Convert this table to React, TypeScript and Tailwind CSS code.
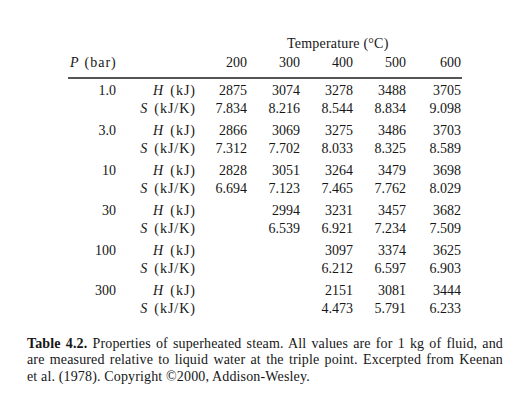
const rows = [
  { p: "1.0", h: ["2875", "3074", "3278", "3488", "3705"], s: ["7.834", "8.216", "8.544", "8.834", "9.098"] },
  { p: "3.0", h: ["2866", "3069", "3275", "3486", "3703"], s: ["7.312", "7.702", "8.033", "8.325", "8.589"] },
  { p: "10", h: ["2828", "3051", "3264", "3479", "3698"], s: ["6.694", "7.123", "7.465", "7.762", "8.029"] },
  { p: "30", h: ["", "2994", "3231", "3457", "3682"], s: ["", "6.539", "6.921", "7.234", "7.509"] },
  { p: "100", h: ["", "", "3097", "3374", "3625"], s: ["", "", "6.212", "6.597", "6.903"] },
  { p: "300", h: ["", "", "2151", "3081", "3444"], s: ["", "", "4.473", "5.791", "6.233"] },
];

const temps = ["200", "300", "400", "500", "600"];
const cols = "grid grid-cols-[48px_79px_52px_53px_53px_53px_55px]";
const line = "text-justify [text-align-last:justify]";

export default function App() {
  return (
    <div
      className="w-[524px] h-[406px] bg-white text-[#161616] overflow-hidden"
      style={{ fontFamily: '"Liberation Serif", "Times New Roman", serif' }}
    >
      <div className="ml-[68px] mt-[35px] w-[394px] text-[14px] leading-[18px]">
        <div className={cols}>
          <div className="col-start-3 col-span-5 pl-[92px] tracking-[0.2px]">Temperature (°C)</div>
        </div>
        <div className={`${cols} mt-px`}>
          <div className="pl-[2px] whitespace-nowrap tracking-[1px]">
            <i>P</i>
            <span className="ml-[5px]">(bar)</span>
          </div>
          <div />
          {temps.map((t) => (
            <div key={t} className="text-right">
              {t}
            </div>
          ))}
        </div>
        <div className="mt-[5px] h-[1.5px] bg-[#555]" />
        <div className="mt-[3px]">
          {rows.map((r) => (
            <div key={r.p} className={`${cols} mb-[4px]`}>
              <div className="text-right">{r.p}</div>
              <div className="text-right tracking-[1px] -mr-px whitespace-nowrap">
                <i>H</i>
                <span className="ml-[6px]">(kJ)</span>
              </div>
              {r.h.map((v, i) => (
                <div key={"h" + i} className="text-right">
                  {v}
                </div>
              ))}
              <div />
              <div className="text-right tracking-[1px] -mr-px whitespace-nowrap">
                <i>S</i>
                <span className="ml-[6px]">(kJ/K)</span>
              </div>
              {r.s.map((v, i) => (
                <div key={"s" + i} className="text-right">
                  {v}
                </div>
              ))}
            </div>
          ))}
        </div>
      </div>
      <div className="ml-[27px] mt-[18px] w-[476px] text-[14px] leading-[16.5px] tracking-[0.15px]">
        <div className={line}>
          <b>Table 4.2.</b> Properties of superheated steam. All values are for 1 kg of fluid, and
        </div>
        <div className={line}>
          are measured relative to liquid water at the triple point. Excerpted from Keenan
        </div>
        <div>et al. (1978). Copyright ©2000, Addison-Wesley.</div>
      </div>
    </div>
  );
}
